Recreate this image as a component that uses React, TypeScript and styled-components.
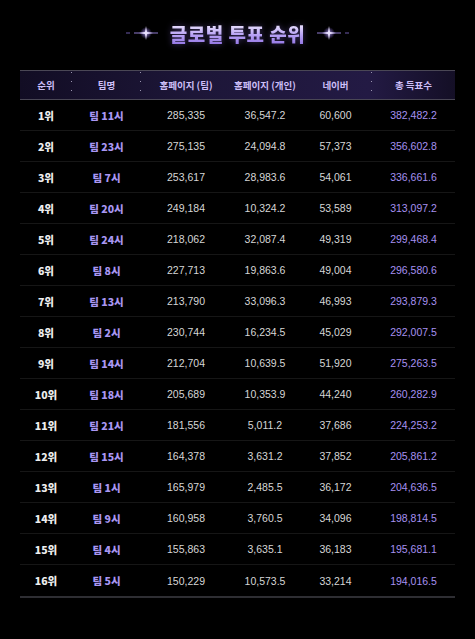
import React from "react";
import styled, { createGlobalStyle } from "styled-components";

const Global = createGlobalStyle`
  html, body { margin: 0; padding: 0; background: #000; }
  body { font-family: "Noto Sans CJK KR", "Noto Sans", sans-serif; }
`;

const Page = styled.div`
  width: 475px;
  min-height: 639px;
  background: #000;
  padding: 18px 20px 0;
  box-sizing: border-box;
`;

const TitleRow = styled.div`
  display: flex;
  align-items: center;
  justify-content: center;
  gap: 8px;
  height: 30px;
  margin-bottom: 22px;
`;

const Title = styled.h1`
  margin: 0;
  font-family: "Noto Sans CJK KR", sans-serif;
  font-size: 19px;
  font-weight: 900;
  letter-spacing: 0.5px;
  background: linear-gradient(180deg, #f4efff 10%, #b8a2f5 55%, #8a6be0 100%);
  -webkit-background-clip: text;
  background-clip: text;
  color: transparent;
  filter: drop-shadow(0 0 3px rgba(140, 110, 230, 0.45));
`;

const Sparkle = ({ flip }: { flip?: boolean }) => (
  <svg width="36" height="16" viewBox="0 0 36 16" style={{ transform: flip ? "scaleX(-1)" : undefined }}>
    <defs>
      <radialGradient id="glw" cx="0.5" cy="0.5" r="0.5">
        <stop offset="0" stopColor="#c9b6ff" stopOpacity="0.9" />
        <stop offset="1" stopColor="#7a5ad8" stopOpacity="0" />
      </radialGradient>
    </defs>
    <line x1="0" y1="8" x2="4" y2="8" stroke="#6a58a8" strokeWidth="1" />
    <line x1="8" y1="8" x2="32" y2="8" stroke="#8f7ad0" strokeWidth="1" />
    <circle cx="20" cy="8" r="6" fill="url(#glw)" />
    <path d="M20 1 L21 7 L27 8 L21 9 L20 15 L19 9 L13 8 L19 7 Z" fill="#eae2ff" />
  </svg>
);

const Table = styled.div`
  width: 435px;
  border-bottom: 2px solid #2e2e33;
`;

const cols = "52px 69px 90px 68px 73px 1fr";

const HeadRow = styled.div`
  display: grid;
  grid-template-columns: ${cols};
  height: 30px;
  border-top: 1.5px solid #4a4755;
  border-bottom: 1.5px solid #4a4755;
  background: linear-gradient(90deg, #120d24 0%, #1d1638 40%, #231a44 80%, #140f26 100%);
  box-sizing: border-box;
`;

const HeadCell = styled.div<{ $sep?: boolean }>`
  position: relative;
  display: flex;
  align-items: center;
  justify-content: center;
  font-size: 9.5px;
  font-weight: 700;
  color: #cdbff8;
  &::after {
    content: "";
    display: ${(p) => (p.$sep ? "block" : "none")};
    position: absolute;
    right: 0;
    top: 1px;
    bottom: 0;
    width: 1px;
    background: repeating-linear-gradient(
      to bottom,
      #9a94b0 0 1px,
      transparent 1px 9px
    );
  }
`;

const Row = styled.div`
  display: grid;
  grid-template-columns: ${cols};
  height: 31px;
  border-bottom: 1px solid #161616;
  box-sizing: border-box;
  &:last-child { border-bottom: none; }
`;

const Cell = styled.div<{ $kind?: "rank" | "team" | "num" | "total" }>`
  display: flex;
  align-items: center;
  justify-content: center;
  font-family: ${(p) =>
    p.$kind === "rank" || p.$kind === "team"
      ? `"Noto Sans CJK KR", sans-serif`
      : `"Liberation Sans", Arial, sans-serif`};
  font-size: 10.5px;
  font-weight: ${(p) => (p.$kind === "rank" ? 900 : p.$kind === "team" ? 800 : 400)};
  color: ${(p) =>
    p.$kind === "team" ? "#a996f2" : p.$kind === "total" ? "#a690f0" : p.$kind === "rank" ? "#ededed" : "#d6d6d6"};
`;

const data: [string, string, string, string, string][] = [
  ["팀 11시", "285,335", "36,547.2", "60,600", "382,482.2"],
  ["팀 23시", "275,135", "24,094.8", "57,373", "356,602.8"],
  ["팀 7시", "253,617", "28,983.6", "54,061", "336,661.6"],
  ["팀 20시", "249,184", "10,324.2", "53,589", "313,097.2"],
  ["팀 24시", "218,062", "32,087.4", "49,319", "299,468.4"],
  ["팀 8시", "227,713", "19,863.6", "49,004", "296,580.6"],
  ["팀 13시", "213,790", "33,096.3", "46,993", "293,879.3"],
  ["팀 2시", "230,744", "16,234.5", "45,029", "292,007.5"],
  ["팀 14시", "212,704", "10,639.5", "51,920", "275,263.5"],
  ["팀 18시", "205,689", "10,353.9", "44,240", "260,282.9"],
  ["팀 21시", "181,556", "5,011.2", "37,686", "224,253.2"],
  ["팀 15시", "164,378", "3,631.2", "37,852", "205,861.2"],
  ["팀 1시", "165,979", "2,485.5", "36,172", "204,636.5"],
  ["팀 9시", "160,958", "3,760.5", "34,096", "198,814.5"],
  ["팀 4시", "155,863", "3,635.1", "36,183", "195,681.1"],
  ["팀 5시", "150,229", "10,573.5", "33,214", "194,016.5"],
];

export default function App() {
  return (
    <>
      <Global />
      <Page>
        <TitleRow>
          <Sparkle />
          <Title>글로벌 투표 순위</Title>
          <Sparkle flip />
        </TitleRow>
        <Table>
          <HeadRow>
            <HeadCell $sep>순위</HeadCell>
            <HeadCell $sep>팀명</HeadCell>
            <HeadCell>홈페이지 (팀)</HeadCell>
            <HeadCell>홈페이지 (개인)</HeadCell>
            <HeadCell $sep>네이버</HeadCell>
            <HeadCell>총 득표수</HeadCell>
          </HeadRow>
          {data.map((d, i) => (
            <Row key={i}>
              <Cell $kind="rank">{i + 1}위</Cell>
              <Cell $kind="team">{d[0]}</Cell>
              <Cell $kind="num">{d[1]}</Cell>
              <Cell $kind="num">{d[2]}</Cell>
              <Cell $kind="num">{d[3]}</Cell>
              <Cell $kind="total">{d[4]}</Cell>
            </Row>
          ))}
        </Table>
      </Page>
    </>
  );
}
